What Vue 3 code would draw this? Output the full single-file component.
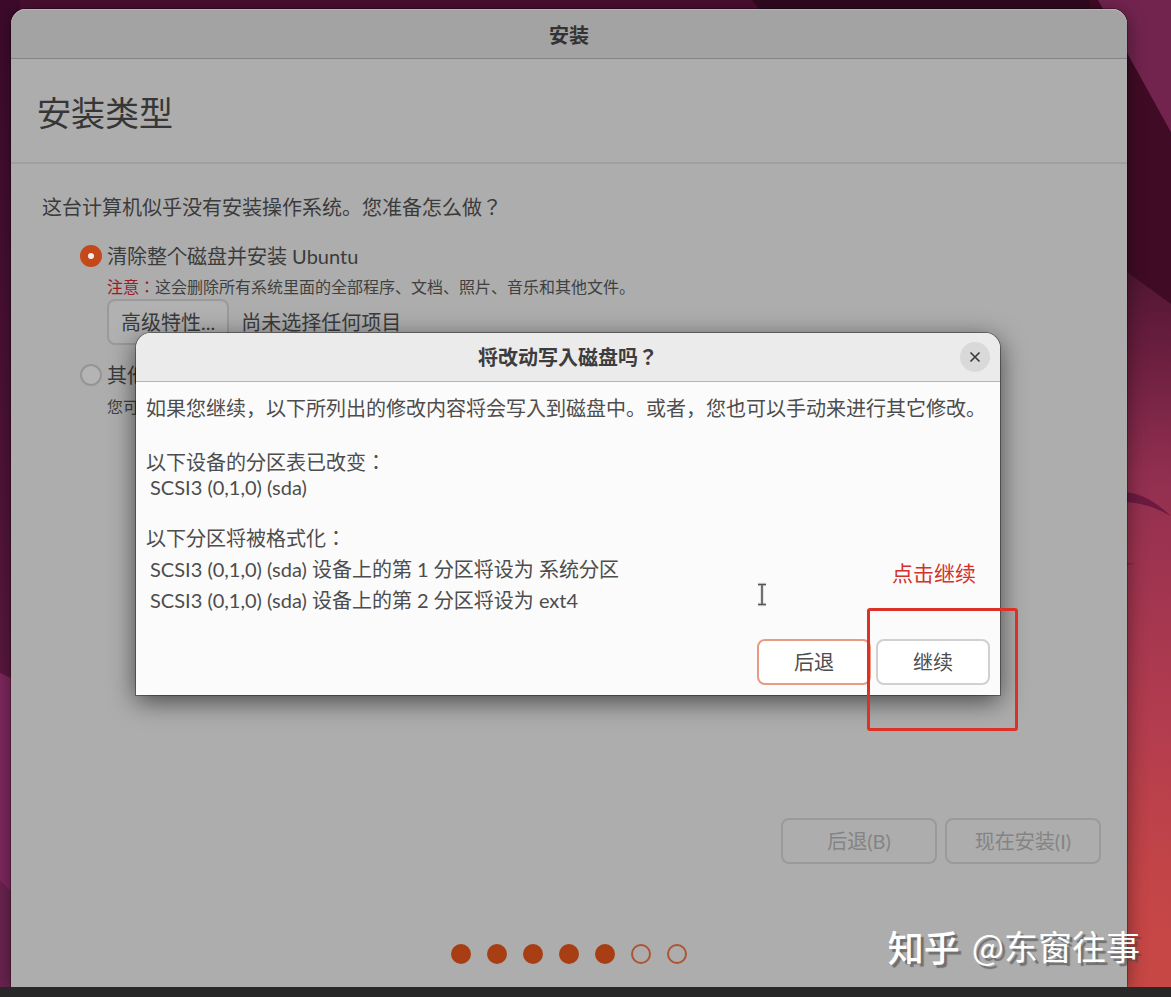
<template>
  <div class="desktop">
    <svg class="wallpaper" viewBox="0 0 1171 987" preserveAspectRatio="none" aria-hidden="true">
      <defs>
        <linearGradient id="left" x1="0" y1="0" x2="0" y2="1">
          <stop offset="0" stop-color="#3d0a2c" />
          <stop offset="0.4" stop-color="#4e1236" />
          <stop offset="1" stop-color="#6a1f4a" />
        </linearGradient>
        <linearGradient id="right" x1="0" y1="0" x2="0" y2="1">
          <stop offset="0" stop-color="#4c1530" />
          <stop offset="0.14" stop-color="#6c1f3f" />
          <stop offset="0.3" stop-color="#922f50" />
          <stop offset="0.6" stop-color="#b03b4f" />
          <stop offset="0.85" stop-color="#c44547" />
          <stop offset="1" stop-color="#c84844" />
        </linearGradient>
      </defs>
      <rect width="1171" height="987" fill="url(#left)" />
      <path d="M20 0H760L790 20H20z" fill="#4a0f30" />
      <path d="M752 0H1110V20H768z" fill="#320a20" />
      <path d="M0 666L20 676V892L0 872z" fill="#80285f" />
      <path d="M0 872L20 892V987H0z" fill="#6c2450" />
      <path d="M1090 0H1171V310H1090z" fill="#400b24" />
      <path d="M1098 0H1171V131L1128 54z" fill="#72244f" />
      <path d="M1100 250L1171 301V987H1100z" fill="url(#right)" />
      <path d="M1120 487Q1145 486 1171 511Q1145 496 1120 497z" fill="#6c1a41" />
      <path d="M1120 557L1136 558L1120 560z" fill="#7a2146" />
    </svg>

    <main class="window">
      <header class="titlebar">安装</header>
      <h1 class="heading">安装类型</h1>

      <section class="content">
        <p class="question">这台计算机似乎没有安装操作系统。您准备怎么做？</p>

        <label class="option">
          <input v-model="installType" type="radio" name="install-type" value="erase" />
          <span>清除整个磁盘并安装 Ubuntu</span>
        </label>
        <p class="note"><span class="warn">注意：</span>这会删除所有系统里面的全部程序、文档、照片、音乐和其他文件。</p>
        <div class="features">
          <button class="btn" type="button">高级特性...</button>
          <span>尚未选择任何项目</span>
        </div>

        <label class="option other">
          <input v-model="installType" type="radio" name="install-type" value="other" />
          <span>其他</span>
        </label>
        <p class="note">您可</p>
      </section>

      <div class="actions">
        <button class="btn" type="button" disabled>后退(B)</button>
        <button class="btn" type="button" disabled>现在安装(I)</button>
      </div>

      <div class="steps">
        <span v-for="n in totalSteps" :key="n" :class="['step', { done: n <= currentStep }]"></span>
      </div>

      <div class="overlay">
        <section class="dialog" role="dialog" aria-labelledby="dialog-title">
          <header class="dialog-head">
            <h2 id="dialog-title">将改动写入磁盘吗？</h2>
            <button class="close" type="button" aria-label="关闭">
              <svg viewBox="0 0 12 12" width="12" height="12">
                <path d="M1.5 1.5l9 9M10.5 1.5l-9 9" fill="none" stroke="#3d3d3d" stroke-width="1.7" />
              </svg>
            </button>
          </header>

          <div class="dialog-body">
            <p class="intro">如果您继续，以下所列出的修改内容将会写入到磁盘中。或者，您也可以手动来进行其它修改。</p>
            <p>以下设备的分区表已改变：</p>
            <ul class="devices">
              <li>SCSI3 (0,1,0) (sda)</li>
            </ul>
            <p>以下分区将被格式化：</p>
            <ul class="partitions">
              <li v-for="item in partitions" :key="item">{{ item }}</li>
            </ul>
          </div>

          <footer class="dialog-foot">
            <button class="btn focused" type="button">后退</button>
            <button class="btn" type="button">继续</button>
          </footer>

          <svg class="cursor" viewBox="0 0 12 26" width="12" height="26" aria-hidden="true">
            <path d="M2 2.5h8M2 22.5h8M6 3v19" fill="none" stroke="#ddd" stroke-width="3.5" />
            <path d="M2 2.5h8M2 22.5h8M6 3v19" fill="none" stroke="#555" stroke-width="1.6" />
          </svg>
          <span class="hint">点击继续</span>
          <span class="hint-box"></span>
        </section>
      </div>
    </main>

    <footer class="bottom-bar"></footer>
    <div class="watermark"><b>知乎</b><span>@东窗往事</span></div>
  </div>
</template>

<script setup>
import { ref } from 'vue'

const installType = ref('erase')

const totalSteps = 7
const currentStep = 5

const partitions = [
  'SCSI3 (0,1,0) (sda) 设备上的第 1 分区将设为 系统分区',
  'SCSI3 (0,1,0) (sda) 设备上的第 2 分区将设为 ext4',
]
</script>

<style>
body { margin: 0; background: #282828; }
</style>

<style scoped>
.desktop {
  position: relative;
  display: flex;
  flex-direction: column;
  min-height: 100vh;
  overflow: hidden;
  font: 20px/28px Lato, "Noto Sans CJK JP", sans-serif;
  color: #3b3b3b;
}
.wallpaper { position: absolute; inset: 0; width: 100%; height: 100%; }
h1, h2, p, ul { margin: 0; padding: 0; font-weight: normal; }
ul { list-style: none; }
button { font: inherit; color: inherit; }

/* installer window */
.window {
  position: relative;
  flex: 1;
  display: flex;
  flex-direction: column;
  margin: 9px 44px 0 11px;
  background: #adadad;
  border-radius: 15px 15px 0 0;
  box-shadow: 0 0 0 1px rgba(0, 0, 0, 0.25), 0 4px 20px rgba(0, 0, 0, 0.45);
}
.titlebar {
  padding: 12px 0 9px;
  text-align: center;
  font-weight: 700;
  color: #333;
  background: #a3a3a3;
  border-bottom: 1px solid #858585;
  border-radius: 15px 15px 0 0;
  box-shadow: inset 0 1px #b5b5b5;
}
.heading {
  padding: 30px 26px 25px;
  font-size: 34px;
  line-height: 48px;
  color: #363636;
  border-bottom: 2px solid #a0a0a0;
}
.content { flex: 1; padding: 28px 31px 0; }
.question { margin-bottom: 20px; line-height: 30px; }
.option { display: flex; align-items: center; gap: 5px; margin-left: 38px; }
.option input {
  appearance: none;
  box-sizing: border-box;
  width: 22px;
  height: 22px;
  margin: 0;
  border: 2px solid #959595;
  border-radius: 50%;
  background: #b4b4b4;
}
.option input:checked { border: 8px solid #c5481b; background: #eee; }
.note { margin-left: 65px; padding-top: 5px; font-size: 16px; line-height: 24px; color: #404040; }
.warn { color: #9b1c26; }
.features { display: flex; align-items: center; gap: 12px; margin-left: 65px; }
.btn {
  box-sizing: border-box;
  height: 46px;
  padding: 0 12px;
  border: 2px solid #9a9a9a;
  border-radius: 8px;
  background: transparent;
}
.features .btn { background: #b1b1b1; }
.option.other { margin-top: 16px; }
.other + .note { padding-top: 6px; }

.actions { display: flex; justify-content: flex-end; gap: 8px; padding: 0 26px; }
.actions .btn { width: 156px; color: #848484; }
.steps { display: flex; justify-content: center; gap: 16px; padding: 80px 0 23px; }
.step { box-sizing: border-box; width: 20px; height: 20px; border: 2px solid #ac5433; border-radius: 50%; }
.step.done { border-color: #a83e14; background: #a83e14; }

/* confirm dialog */
.overlay {
  position: absolute;
  inset: 0;
  display: flex;
  justify-content: center;
  align-items: flex-start;
  padding: 324px 22px 0 20px;
}
.dialog {
  position: relative;
  width: 864px;
  background: #fbfbfb;
  border-radius: 15px 15px 0 0;
  color: #4d4d4d;
  box-shadow: 0 0 0 1px rgba(0, 0, 0, 0.35), 0 6px 26px rgba(0, 0, 0, 0.6);
}
.dialog-head {
  display: flex;
  align-items: center;
  justify-content: center;
  height: 48px;
  background: #ebebeb;
  border-bottom: 1px solid #b5b5b5;
  border-radius: 15px 15px 0 0;
}
.dialog-head h2 { font-size: 20px; font-weight: 700; color: #3d3d3d; }
.close {
  position: absolute;
  top: 9px;
  right: 10px;
  display: grid;
  place-items: center;
  width: 30px;
  height: 30px;
  padding: 0;
  border: 0;
  border-radius: 50%;
  background: #d9d9d9;
}
.dialog-body { padding: 12px 10px 0; }
.dialog-body .intro { margin-bottom: 26px; white-space: nowrap; }
.dialog-body ul { padding-left: 4px; }
.devices { margin-bottom: 26px; line-height: 22px; }
.dialog-body .partitions { padding-top: 2px; line-height: 31px; }
.dialog-foot { display: flex; justify-content: flex-end; gap: 5px; padding: 23px 10px 10px; }
.dialog-foot .btn { width: 114px; background: #fff; border-color: #d0d0d0; }
.dialog-foot .btn.focused { border-color: #e79b83; }

/* annotations over the dialog */
.cursor { position: absolute; left: 620px; top: 249px; }
.hint { position: absolute; right: 24px; top: 226px; font-size: 21px; color: #d5302a; }
.hint-box {
  position: absolute;
  right: -18px;
  bottom: -36px;
  box-sizing: border-box;
  width: 151px;
  height: 123px;
  border: 3px solid #dc3127;
  border-radius: 3px;
}

.bottom-bar { position: relative; height: 10px; background: #282828; }
.watermark {
  position: absolute;
  right: 31px;
  bottom: 26px;
  display: flex;
  align-items: center;
  gap: 12px;
  font-family: "Noto Sans CJK SC", sans-serif;
  font-size: 34px;
  line-height: 50px;
  color: #fff;
  text-shadow: 3px 3px 1px rgba(70, 70, 70, 0.6);
}
.watermark b { font-size: 36px; font-weight: 500; }
</style>
